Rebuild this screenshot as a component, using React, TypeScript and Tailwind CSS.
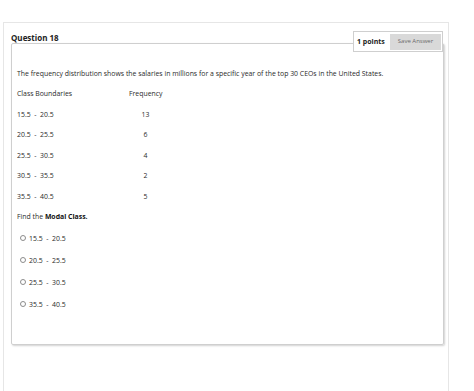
export default function App() {
  const rows = [
    { range: "15.5  -  20.5", freq: "13" },
    { range: "20.5  -  25.5", freq: "6" },
    { range: "25.5  -  30.5", freq: "4" },
    { range: "30.5  -  35.5", freq: "2" },
    { range: "35.5  -  40.5", freq: "5" },
  ];
  const options = ["15.5  -  20.5", "20.5  -  25.5", "25.5  -  30.5", "35.5  -  40.5"];

  return (
    <div className="w-[474px] h-[391px] overflow-hidden bg-white font-['Open_Sans',sans-serif]">
      <div className="ml-[3px] mt-[22px] w-[446px] h-[400px] border border-[#e6e6e6] pl-[7px] pt-[9px]">
        {/* HEADER */}
        <div className="h-[11px] flex items-center">
          <span className="text-[8px] font-bold text-[#222] leading-none">Question 18</span>
        </div>

        {/* QUESTION BOX */}
        <div className="relative w-[433px] h-[302px] border border-[#cfcfcf] rounded-[2px] shadow-[1px_1px_2px_rgba(0,0,0,0.18)] pl-[5px] pt-[19px] text-[6.9px] leading-[9px] text-[#2a2a2a]">
          {/* POINTS */}
          <div className="absolute right-[0px] top-[-13px] w-[90px] h-[21px] border border-[#cfcfcf] bg-white flex items-center pl-[3px] pr-[1px] gap-[4px]">
            <span className="text-[7px] font-bold text-[#222] whitespace-nowrap">1 points</span>
            <div className="ml-auto w-[51px] h-[16px] bg-[#d9d9d9] flex items-center justify-center text-[6px] text-[#6b6b6b]">
              Save Answer
            </div>
          </div>

          <div className="h-[20.5px] flex items-center whitespace-nowrap">
            The frequency distribution shows the salaries in millions for a specific year of the top 30 CEOs in the United States.
          </div>

          <div className="h-[20.5px] flex items-center">
            <span className="w-[112px]">Class Boundaries</span>
            <span className="w-[33px] text-center">Frequency</span>
          </div>

          {rows.map((r) => (
            <div key={r.range} className="h-[20.5px] flex items-center">
              <span className="w-[112px] whitespace-pre">{r.range}</span>
              <span className="w-[33px] text-center">{r.freq}</span>
            </div>
          ))}

          <div className="h-[20.5px] flex items-center">
            Find the&nbsp;<span className="font-bold text-[#111]">Modal Class.</span>
          </div>

          {options.map((o) => (
            <div key={o} className="h-[22px] flex items-center pl-[3px] gap-[3px]">
              <span className="w-[6px] h-[6px] rounded-full border border-[#8c8c8c] bg-white" />
              <span className="whitespace-pre">{o}</span>
            </div>
          ))}
        </div>
      </div>
    </div>
  );
}
